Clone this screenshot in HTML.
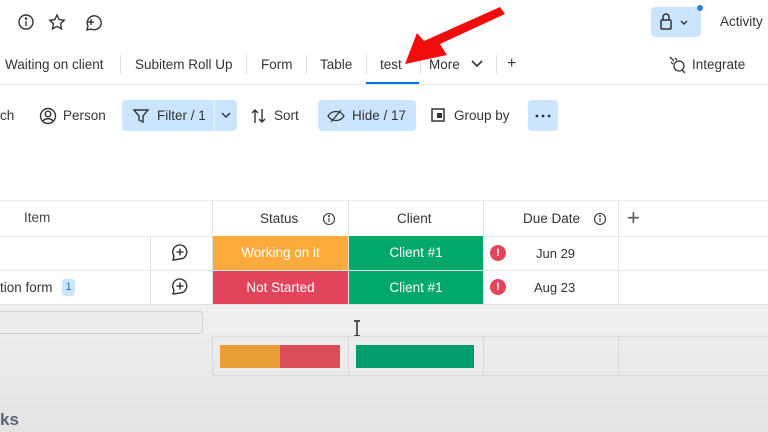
<!DOCTYPE html>
<html><head><style>
*{margin:0;padding:0;box-sizing:border-box}
body{width:768px;height:432px;overflow:hidden;font-family:"Liberation Sans",sans-serif;color:#323338;position:relative;background:#fff}
.a{position:absolute;white-space:nowrap}
.t{font-size:13.5px;color:#323338}
.sep{position:absolute;width:1px;background:#dcdde2}
.btn{position:absolute;background:#cce5ff;border-radius:4px}
.cell{position:absolute;color:#fff;font-size:13.5px;text-align:center;line-height:34px}
</style></head><body>
<div class="a" style="left:0;top:304px;width:768px;height:128px;background:linear-gradient(#f0f0f0,#e4e4e4)"></div>
<svg class="a" style="left:17px;top:13px" width="90" height="20" fill="none" stroke="#323338" stroke-width="1.4">
<circle cx="9" cy="9" r="7"/><line x1="9" y1="8" x2="9" y2="13"/><circle cx="9" cy="5.5" r=".6" fill="#323338"/>
<path d="M40 2l2.2 4.6 5 .7-3.6 3.5.9 5-4.5-2.4-4.5 2.4.9-5-3.6-3.5 5-.7z"/>
<path d="M74 16a7 7 0 1 0-3-3l-1 4z"/><line x1="74" y1="6" x2="74" y2="12"/><line x1="71" y1="9" x2="77" y2="9"/>
</svg>
<div class="btn" style="left:651px;top:7px;width:50px;height:30px"></div>
<svg class="a" style="left:659px;top:13px" width="36" height="18" fill="none" stroke="#323338" stroke-width="1.5"><rect x="2" y="7" width="10" height="9" rx="1"/><path d="M4 7V4a3 3 0 0 1 6 0v3"/><path d="M22 8l3 3 3-3"/></svg>
<div class="a" style="left:697px;top:5px;width:6px;height:6px;border-radius:50%;background:#2f7ed8"></div>
<div class="a t" style="left:720px;top:14px">Activity</div>
<div class="a t" style="left:5px;top:57px">Waiting on client</div>
<div class="sep" style="left:120px;top:55px;height:19px"></div>
<div class="a t" style="left:135px;top:57px">Subitem Roll Up</div>
<div class="sep" style="left:246px;top:55px;height:19px"></div>
<div class="a t" style="left:261px;top:57px">Form</div>
<div class="sep" style="left:306px;top:55px;height:19px"></div>
<div class="a t" style="left:320px;top:57px">Table</div>
<div class="sep" style="left:366px;top:55px;height:19px"></div>
<div class="a t" style="left:380px;top:57px">test</div>
<div class="a" style="left:366px;top:82px;width:53px;height:2px;background:#0073ea"></div>
<div class="sep" style="left:420px;top:55px;height:19px"></div>
<div class="a t" style="left:429px;top:57px">More</div>
<svg class="a" style="left:470px;top:58px" width="14" height="12" fill="none" stroke="#323338" stroke-width="1.6"><path d="M2 3l5 5 5-5"/></svg>
<div class="sep" style="left:496px;top:55px;height:19px"></div>
<div class="a t" style="left:507px;top:55px;font-size:16px">+</div>
<svg class="a" style="left:668px;top:55px" width="20" height="20" fill="none" stroke="#323338" stroke-width="1.3"><circle cx="11" cy="11" r="5"/><path d="M2 2l4 4M7 3l2 2M3 7l2 2M14 15l3 3"/></svg>
<div class="a t" style="left:692px;top:57px">Integrate</div>
<div class="a" style="left:0;top:84px;width:768px;height:1px;background:#e6e9ef"></div>
<div class="a t" style="left:0;top:108px">ch</div>
<svg class="a" style="left:39px;top:107px" width="18" height="18" fill="none" stroke="#323338" stroke-width="1.4"><circle cx="9" cy="9" r="7.5"/><circle cx="9" cy="7" r="2.8"/><path d="M4 14c2-3 8-3 10 0"/></svg>
<div class="a t" style="left:63px;top:108px">Person</div>
<div class="btn" style="left:122px;top:100px;width:115px;height:31px"></div>
<div class="a" style="left:214px;top:100px;width:1px;height:31px;background:#fff;opacity:.6"></div>
<svg class="a" style="left:132px;top:107px" width="18" height="18" fill="none" stroke="#323338" stroke-width="1.4"><path d="M2 3h14l-5 6v6l-4-2V9z"/></svg>
<div class="a t" style="left:157px;top:108px">Filter / 1</div>
<svg class="a" style="left:219px;top:110px" width="14" height="12" fill="none" stroke="#323338" stroke-width="1.5"><path d="M3 3l4 4 4-4"/></svg>
<svg class="a" style="left:250px;top:107px" width="18" height="18" fill="none" stroke="#323338" stroke-width="1.4"><path d="M5 16V3M2 6l3-3 3 3M12 2v13M9 12l3 3 3-3"/></svg>
<div class="a t" style="left:274px;top:108px">Sort</div>
<div class="btn" style="left:318px;top:100px;width:98px;height:31px"></div>
<svg class="a" style="left:327px;top:108px" width="18" height="16" fill="none" stroke="#323338" stroke-width="1.3"><path d="M1 8c4-6 12-6 16 0-4 6-12 6-16 0z"/><path d="M4 14L14 2"/></svg>
<div class="a t" style="left:352px;top:108px">Hide / 17</div>
<svg class="a" style="left:431px;top:108px" width="14" height="14"><rect x="1" y="1" width="12" height="12" fill="none" stroke="#323338" stroke-width="1.5"/><rect x="6" y="5" width="5" height="5" fill="#323338"/></svg>
<div class="a t" style="left:454px;top:108px">Group by</div>
<div class="btn" style="left:528px;top:100px;width:30px;height:31px"></div>
<svg class="a" style="left:528px;top:100px" width="30" height="31" fill="#323338"><circle cx="9" cy="16" r="1.4"/><circle cx="15" cy="16" r="1.4"/><circle cx="21" cy="16" r="1.4"/></svg>
<div class="a" style="left:0;top:200px;width:768px;height:1px;background:#e6e9ef"></div>
<div class="a t" style="left:24px;top:210px;color:#444">Item</div>
<div class="sep" style="left:212px;top:201px;height:103px;background:#e0e0e0"></div>
<div class="sep" style="left:348px;top:201px;height:103px;background:#e0e0e0"></div>
<div class="sep" style="left:483px;top:201px;height:103px;background:#e0e0e0"></div>
<div class="sep" style="left:618px;top:201px;height:103px;background:#e0e0e0"></div>
<div class="sep" style="left:212px;top:336px;height:40px;background:#d8d8d8"></div>
<div class="sep" style="left:348px;top:336px;height:40px;background:#d8d8d8"></div>
<div class="sep" style="left:483px;top:336px;height:40px;background:#d8d8d8"></div>
<div class="sep" style="left:618px;top:336px;height:40px;background:#d8d8d8"></div>
<div class="sep" style="left:150px;top:236px;height:68px;background:#e0e0e0"></div>
<div class="a t" style="left:260px;top:211px">Status</div>
<svg class="a" style="left:322px;top:212px" width="14" height="14" fill="none" stroke="#323338" stroke-width="1.1"><circle cx="7" cy="7" r="5.5"/><line x1="7" y1="6" x2="7" y2="10"/><circle cx="7" cy="4" r=".5"/></svg>
<div class="a t" style="left:397px;top:211px">Client</div>
<div class="a t" style="left:523px;top:211px">Due Date</div>
<svg class="a" style="left:593px;top:212px" width="14" height="14" fill="none" stroke="#323338" stroke-width="1.1"><circle cx="7" cy="7" r="5.5"/><line x1="7" y1="6" x2="7" y2="10"/><circle cx="7" cy="4" r=".5"/></svg>
<div class="a" style="left:627px;top:205px;font-size:22px;font-weight:300;color:#555">+</div>
<div class="a" style="left:0;top:236px;width:768px;height:1px;background:#e6e9ef"></div>
<div class="a" style="left:0;top:270px;width:768px;height:1px;background:#e6e9ef"></div>
<div class="a" style="left:0;top:304px;width:768px;height:1px;background:#e0e0e0"></div>
<svg class="a" style="left:171px;top:243px" width="18" height="18" fill="none" stroke="#323338" stroke-width="1.4"><path d="M9 16a7 7 0 1 0-6-3l-1 4z"/><line x1="9" y1="5.5" x2="9" y2="12.5"/><line x1="5.5" y1="9" x2="12.5" y2="9"/></svg>
<svg class="a" style="left:171px;top:277px" width="18" height="18" fill="none" stroke="#323338" stroke-width="1.4"><path d="M9 16a7 7 0 1 0-6-3l-1 4z"/><line x1="9" y1="5.5" x2="9" y2="12.5"/><line x1="5.5" y1="9" x2="12.5" y2="9"/></svg>
<div class="a t" style="left:0;top:280px">tion form</div>
<div class="a" style="left:62px;top:279px;width:13px;height:17px;background:#cce5ff;border-radius:3px;font-size:11px;text-align:center;line-height:17px;color:#1f76c2">1</div>
<div class="cell" style="left:213px;top:236px;width:135px;height:34px;background:#fdab3d">Working on it</div>
<div class="cell" style="left:213px;top:271px;width:135px;height:33px;background:#e2445c">Not Started</div>
<div class="cell" style="left:349px;top:236px;width:134px;height:34px;background:#00a86b">Client #1</div>
<div class="cell" style="left:349px;top:271px;width:134px;height:33px;background:#00a86b">Client #1</div>
<div class="a" style="left:490px;top:245px;width:16px;height:16px;border-radius:50%;background:#e2445c;color:#fff;font-size:11px;font-weight:bold;text-align:center;line-height:16px">!</div>
<div class="a" style="left:490px;top:279px;width:16px;height:16px;border-radius:50%;background:#e2445c;color:#fff;font-size:11px;font-weight:bold;text-align:center;line-height:16px">!</div>
<div class="a t" style="left:536px;top:246px;font-size:13px">Jun 29</div>
<div class="a t" style="left:534px;top:280px;font-size:13px">Aug 23</div>
<div class="a" style="left:-4px;top:311px;width:207px;height:23px;border:1px solid #d0d0d0;border-radius:4px;background:#ededed"></div>
<svg class="a" style="left:352px;top:320px" width="10" height="18" fill="none" stroke="#222" stroke-width="1.4"><path d="M2 1h6M5 1v15M2 16h6"/></svg>
<div class="a" style="left:212px;top:336px;width:556px;height:1px;background:#dcdcdc"></div>
<div class="a" style="left:212px;top:375px;width:556px;height:1px;background:#d8d8d8"></div>
<div class="a" style="left:220px;top:345px;width:60px;height:23px;background:#e99f36"></div>
<div class="a" style="left:280px;top:345px;width:60px;height:23px;background:#d94e5a"></div>
<div class="a" style="left:356px;top:345px;width:118px;height:23px;background:#009e6c"></div>
<div class="a" style="left:0;top:410px;font-size:17px;font-weight:bold;color:#5a6478">ks</div>
<svg class="a" style="left:0;top:0" width="768" height="100"><polygon points="500,7 505,14 440,44 447,55 405,64 417,33 424,41" fill="#f20d0d"/></svg>
</body></html>
